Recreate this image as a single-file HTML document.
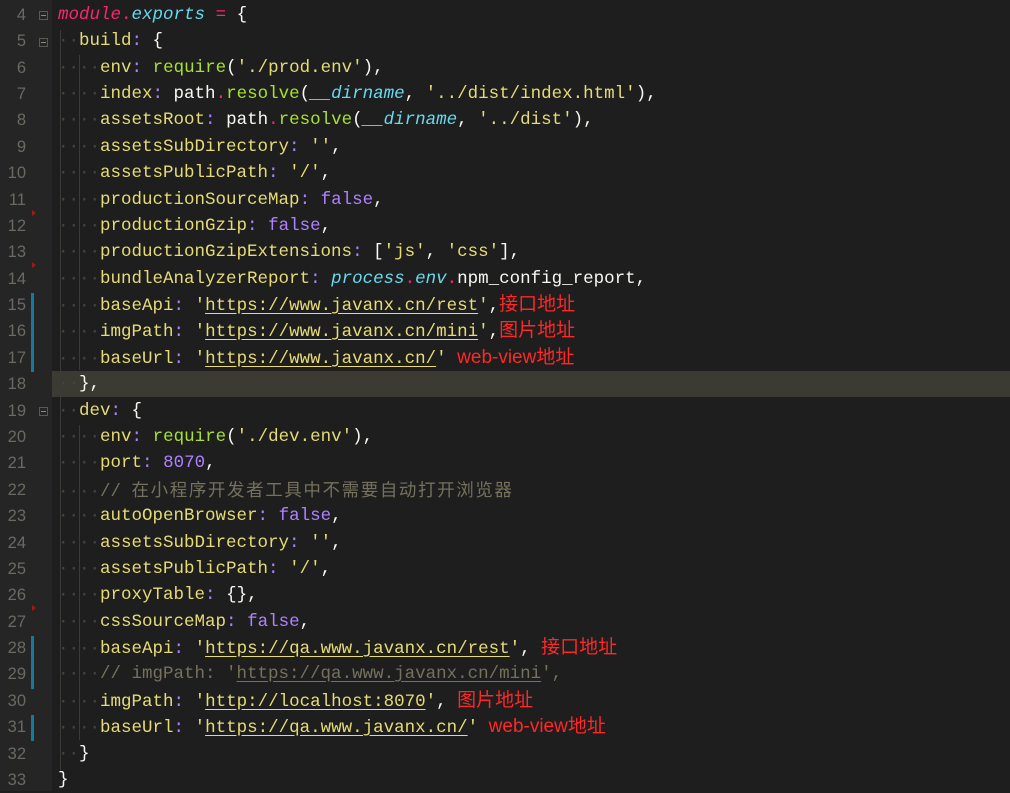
<!DOCTYPE html><html><head><meta charset="utf-8"><style>
body{margin:0;width:1010px;height:791px;overflow:hidden;background:#1e1e1e;position:relative}
.g{position:absolute;left:0;top:0;width:52px;height:791px;background:#252525}
.hl{position:absolute;left:52px;top:371px;width:958px;height:26px;background:#3c3b33}
.l{position:absolute;left:0;height:26px;line-height:26px;white-space:pre;font-family:"Liberation Mono","Noto Sans CJK SC",monospace;font-size:17.5px;color:#f8f8f2}
.n{position:absolute;left:0;width:26px;text-align:right;color:#6a6a62;font-family:"Liberation Sans",sans-serif;font-size:16.5px}
.c{position:absolute;left:58px}
.d{color:#45453f}.k{color:#e6db74}.s{color:#e6db74}.u{color:#e6db74;text-decoration:underline;text-underline-offset:3px}
.p{color:#ae81ff}.r{color:#f92672}.f{color:#a6e22e}.i{font-style:italic;color:#66d9ef}.m{color:#f92672;font-style:italic}
.cm{color:#75715e}.cu{color:#75715e;text-decoration:underline;text-underline-offset:3px}
.cj{font-family:"Noto Sans CJK SC",sans-serif;font-size:17.5px;letter-spacing:1.6px}
.z{color:#ff2727;font-family:"Liberation Sans","Noto Sans CJK SC",sans-serif;font-size:19px}
.bar{position:absolute;left:31px;width:3px;background:#0f7e9e}
.tri{position:absolute;left:32px;width:0;height:0;border-top:3px solid transparent;border-bottom:3px solid transparent;border-left:4px solid #a01818}
.fb{position:absolute;left:39px;width:9px;height:9px;border:1px solid #5a5a55;box-sizing:border-box}
.fb:after{content:"";position:absolute;left:1px;top:3px;width:5px;height:1px;background:#8a8a85}
.vg{position:absolute;width:1px;background:#3a3a36}
</style></head><body>
<div class="g"></div><div class="hl"></div>
<div class="vg" style="left:60px;top:30px;height:740px"></div>
<div class="vg" style="left:79px;top:55px;height:315px"></div>
<div class="vg" style="left:79px;top:425px;height:315px"></div>
<div class="bar" style="top:293px;height:79px"></div>
<div class="bar" style="top:636px;height:53px"></div>
<div class="bar" style="top:715px;height:26px"></div>
<div class="tri" style="top:210px"></div><div class="tri" style="top:262px"></div><div class="tri" style="top:605px"></div>
<div class="fb" style="top:11px"></div><div class="fb" style="top:38px"></div><div class="fb" style="top:407px"></div>
<div class="l" style="top:2px"><span class="n">4</span><span class="c"><span class="m">module</span><span class="r">.</span><span class="i">exports</span> <span class="r">=</span> {</span></div>
<div class="l" style="top:28px"><span class="n">5</span><span class="c"><span class="d">··</span><span class="k">build</span><span class="p">:</span> {</span></div>
<div class="l" style="top:55px"><span class="n">6</span><span class="c"><span class="d">····</span><span class="k">env</span><span class="p">:</span> <span class="f">require</span>(<span class="s">'./prod.env'</span>),</span></div>
<div class="l" style="top:81px"><span class="n">7</span><span class="c"><span class="d">····</span><span class="k">index</span><span class="p">:</span> path<span class="r">.</span><span class="f">resolve</span>(<span class="i">__dirname</span>, <span class="s">'../dist/index.html'</span>),</span></div>
<div class="l" style="top:107px"><span class="n">8</span><span class="c"><span class="d">····</span><span class="k">assetsRoot</span><span class="p">:</span> path<span class="r">.</span><span class="f">resolve</span>(<span class="i">__dirname</span>, <span class="s">'../dist'</span>),</span></div>
<div class="l" style="top:134px"><span class="n">9</span><span class="c"><span class="d">····</span><span class="k">assetsSubDirectory</span><span class="p">:</span> <span class="s">''</span>,</span></div>
<div class="l" style="top:160px"><span class="n">10</span><span class="c"><span class="d">····</span><span class="k">assetsPublicPath</span><span class="p">:</span> <span class="s">'/'</span>,</span></div>
<div class="l" style="top:187px"><span class="n">11</span><span class="c"><span class="d">····</span><span class="k">productionSourceMap</span><span class="p">:</span> <span class="p">false</span>,</span></div>
<div class="l" style="top:213px"><span class="n">12</span><span class="c"><span class="d">····</span><span class="k">productionGzip</span><span class="p">:</span> <span class="p">false</span>,</span></div>
<div class="l" style="top:239px"><span class="n">13</span><span class="c"><span class="d">····</span><span class="k">productionGzipExtensions</span><span class="p">:</span> [<span class="s">'js'</span>, <span class="s">'css'</span>],</span></div>
<div class="l" style="top:266px"><span class="n">14</span><span class="c"><span class="d">····</span><span class="k">bundleAnalyzerReport</span><span class="p">:</span> <span class="i">process</span><span class="r">.</span><span class="i">env</span><span class="r">.</span>npm_config_report,</span></div>
<div class="l" style="top:292px"><span class="n">15</span><span class="c"><span class="d">····</span><span class="k">baseApi</span><span class="p">:</span> <span class="s">'</span><span class="u">https://www.javanx.cn/rest</span><span class="s">'</span>,<span class="z">接口地址</span></span></div>
<div class="l" style="top:318px"><span class="n">16</span><span class="c"><span class="d">····</span><span class="k">imgPath</span><span class="p">:</span> <span class="s">'</span><span class="u">https://www.javanx.cn/mini</span><span class="s">'</span>,<span class="z">图片地址</span></span></div>
<div class="l" style="top:345px"><span class="n">17</span><span class="c"><span class="d">····</span><span class="k">baseUrl</span><span class="p">:</span> <span class="s">'</span><span class="u">https://www.javanx.cn/</span><span class="s">'</span> <span class="z">web-view地址</span></span></div>
<div class="l" style="top:371px"><span class="n">18</span><span class="c"><span class="d">··</span>},</span></div>
<div class="l" style="top:398px"><span class="n">19</span><span class="c"><span class="d">··</span><span class="k">dev</span><span class="p">:</span> {</span></div>
<div class="l" style="top:424px"><span class="n">20</span><span class="c"><span class="d">····</span><span class="k">env</span><span class="p">:</span> <span class="f">require</span>(<span class="s">'./dev.env'</span>),</span></div>
<div class="l" style="top:450px"><span class="n">21</span><span class="c"><span class="d">····</span><span class="k">port</span><span class="p">:</span> <span class="p">8070</span>,</span></div>
<div class="l" style="top:477px"><span class="n">22</span><span class="c"><span class="d">····</span><span class="cm">// <span class="cj">在小程序开发者工具中不需要自动打开浏览器</span></span></span></div>
<div class="l" style="top:503px"><span class="n">23</span><span class="c"><span class="d">····</span><span class="k">autoOpenBrowser</span><span class="p">:</span> <span class="p">false</span>,</span></div>
<div class="l" style="top:530px"><span class="n">24</span><span class="c"><span class="d">····</span><span class="k">assetsSubDirectory</span><span class="p">:</span> <span class="s">''</span>,</span></div>
<div class="l" style="top:556px"><span class="n">25</span><span class="c"><span class="d">····</span><span class="k">assetsPublicPath</span><span class="p">:</span> <span class="s">'/'</span>,</span></div>
<div class="l" style="top:582px"><span class="n">26</span><span class="c"><span class="d">····</span><span class="k">proxyTable</span><span class="p">:</span> {},</span></div>
<div class="l" style="top:609px"><span class="n">27</span><span class="c"><span class="d">····</span><span class="k">cssSourceMap</span><span class="p">:</span> <span class="p">false</span>,</span></div>
<div class="l" style="top:635px"><span class="n">28</span><span class="c"><span class="d">····</span><span class="k">baseApi</span><span class="p">:</span> <span class="s">'</span><span class="u">https://qa.www.javanx.cn/rest</span><span class="s">'</span>, <span class="z">接口地址</span></span></div>
<div class="l" style="top:661px"><span class="n">29</span><span class="c"><span class="d">····</span><span class="cm">// imgPath: '</span><span class="cu">https://qa.www.javanx.cn/mini</span><span class="cm">',</span></span></div>
<div class="l" style="top:688px"><span class="n">30</span><span class="c"><span class="d">····</span><span class="k">imgPath</span><span class="p">:</span> <span class="s">'</span><span class="u">http://localhost:8070</span><span class="s">'</span>, <span class="z">图片地址</span></span></div>
<div class="l" style="top:714px"><span class="n">31</span><span class="c"><span class="d">····</span><span class="k">baseUrl</span><span class="p">:</span> <span class="s">'</span><span class="u">https://qa.www.javanx.cn/</span><span class="s">'</span> <span class="z">web-view地址</span></span></div>
<div class="l" style="top:741px"><span class="n">32</span><span class="c"><span class="d">··</span>}</span></div>
<div class="l" style="top:767px"><span class="n">33</span><span class="c">}</span></div>
</body></html>
